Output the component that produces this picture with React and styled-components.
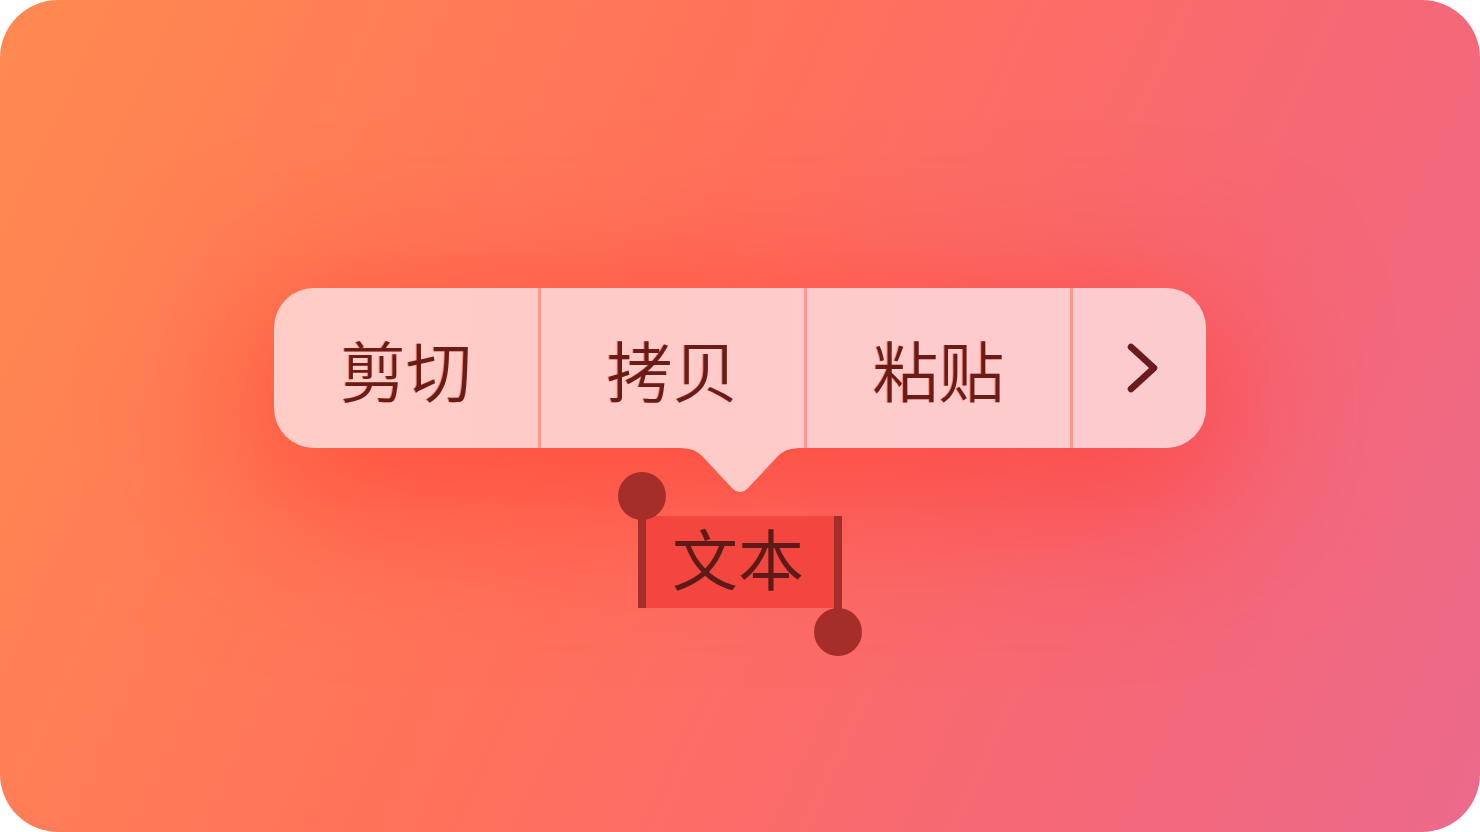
import React from 'react';
import styled, { createGlobalStyle } from 'styled-components';

const GlobalStyle = createGlobalStyle`
  html, body {
    margin: 0;
    padding: 0;
    background: #ffffff;
  }
  body {
    font-family: "Noto Sans CJK SC", "Noto Sans", sans-serif;
  }
`;

const Screen = styled.div`
  width: 1480px;
  height: 832px;
  border-radius: 58px;
  overflow: hidden;
  background: linear-gradient(115deg, #ff8a50 0%, #ff705c 45%, #f66876 75%, #ec6a8c 100%);
  display: flex;
  flex-direction: column;
  align-items: center;
  padding-top: 288px;
  box-sizing: border-box;
`;

const Menu = styled.div`
  position: relative;
  display: flex;
  width: 932px;
  height: 160px;
  border-radius: 40px;
  background: linear-gradient(90deg, #ffccc6 0%, #ffcbca 50%, #fccbcf 100%);
  box-shadow: 0 36px 150px 24px rgba(255, 55, 45, 0.6);
`;

const Item = styled.div`
  flex: 0 0 ${p => p.$w}px;
  display: flex;
  align-items: center;
  justify-content: center;
  border-left: ${p => (p.$first ? 'none' : '3px solid #ff9690')};
  font-size: 66px;
  font-weight: 350;
  line-height: 1;
  color: #6a1d16;
  text-shadow: -1px 0 0 rgba(255, 70, 40, 0.5);
  box-sizing: border-box;
`;

const Tail = styled.svg`
  position: absolute;
  left: 402px;
  top: 100%;
  width: 128px;
  height: 46px;
  display: block;
`;

const Selection = styled.div`
  position: relative;
  margin-top: 68px;
  width: 204px;
  height: 92px;
  box-sizing: border-box;
  border-left: 8px solid #a52e2a;
  border-right: 8px solid #a52e2a;
  background: #f2463f;
  display: flex;
  align-items: center;
  justify-content: center;
  font-size: 66px;
  font-weight: 400;
  line-height: 1;
  color: #5e1a18;
  padding-bottom: 12px;
  padding-right: 4px;
`;

const Handle = styled.span`
  position: absolute;
  width: 48px;
  height: 48px;
  border-radius: 50%;
  background: #a52e2a;
  ${p => (p.$end ? 'right: -28px; bottom: -48px;' : 'left: -28px; top: -44px;')}
`;

const EndStem = styled.span`
  position: absolute;
  right: -8px;
  bottom: -24px;
  width: 8px;
  height: 24px;
  background: #a52e2a;
`;

function Chevron() {
  return (
    <svg width="40" height="60" viewBox="0 0 40 60">
      <path
        d="M11 9 L34 30 L11 51"
        fill="none"
        stroke="#6b1a1e"
        strokeWidth="6.5"
        strokeLinecap="round"
        strokeLinejoin="round"
      />
    </svg>
  );
}

export default function App() {
  return (
    <>
      <GlobalStyle />
      <Screen>
        <Menu>
          <Item $first $w={264}>剪切</Item>
          <Item $w={266}>拷贝</Item>
          <Item $w={266}>粘贴</Item>
          <Item $w={136}>
            <Chevron />
          </Item>
          <Tail viewBox="0 0 128 46">
            <path
              d="M0 0 C14 0 20 2 26 8 L56 40 Q64 48 72 40 L102 8 C108 2 114 0 128 0 Z"
              fill="#ffcbc9"
            />
          </Tail>
        </Menu>
        <Selection>
          <Handle />
          文本
          <EndStem />
          <Handle $end />
        </Selection>
      </Screen>
    </>
  );
}
